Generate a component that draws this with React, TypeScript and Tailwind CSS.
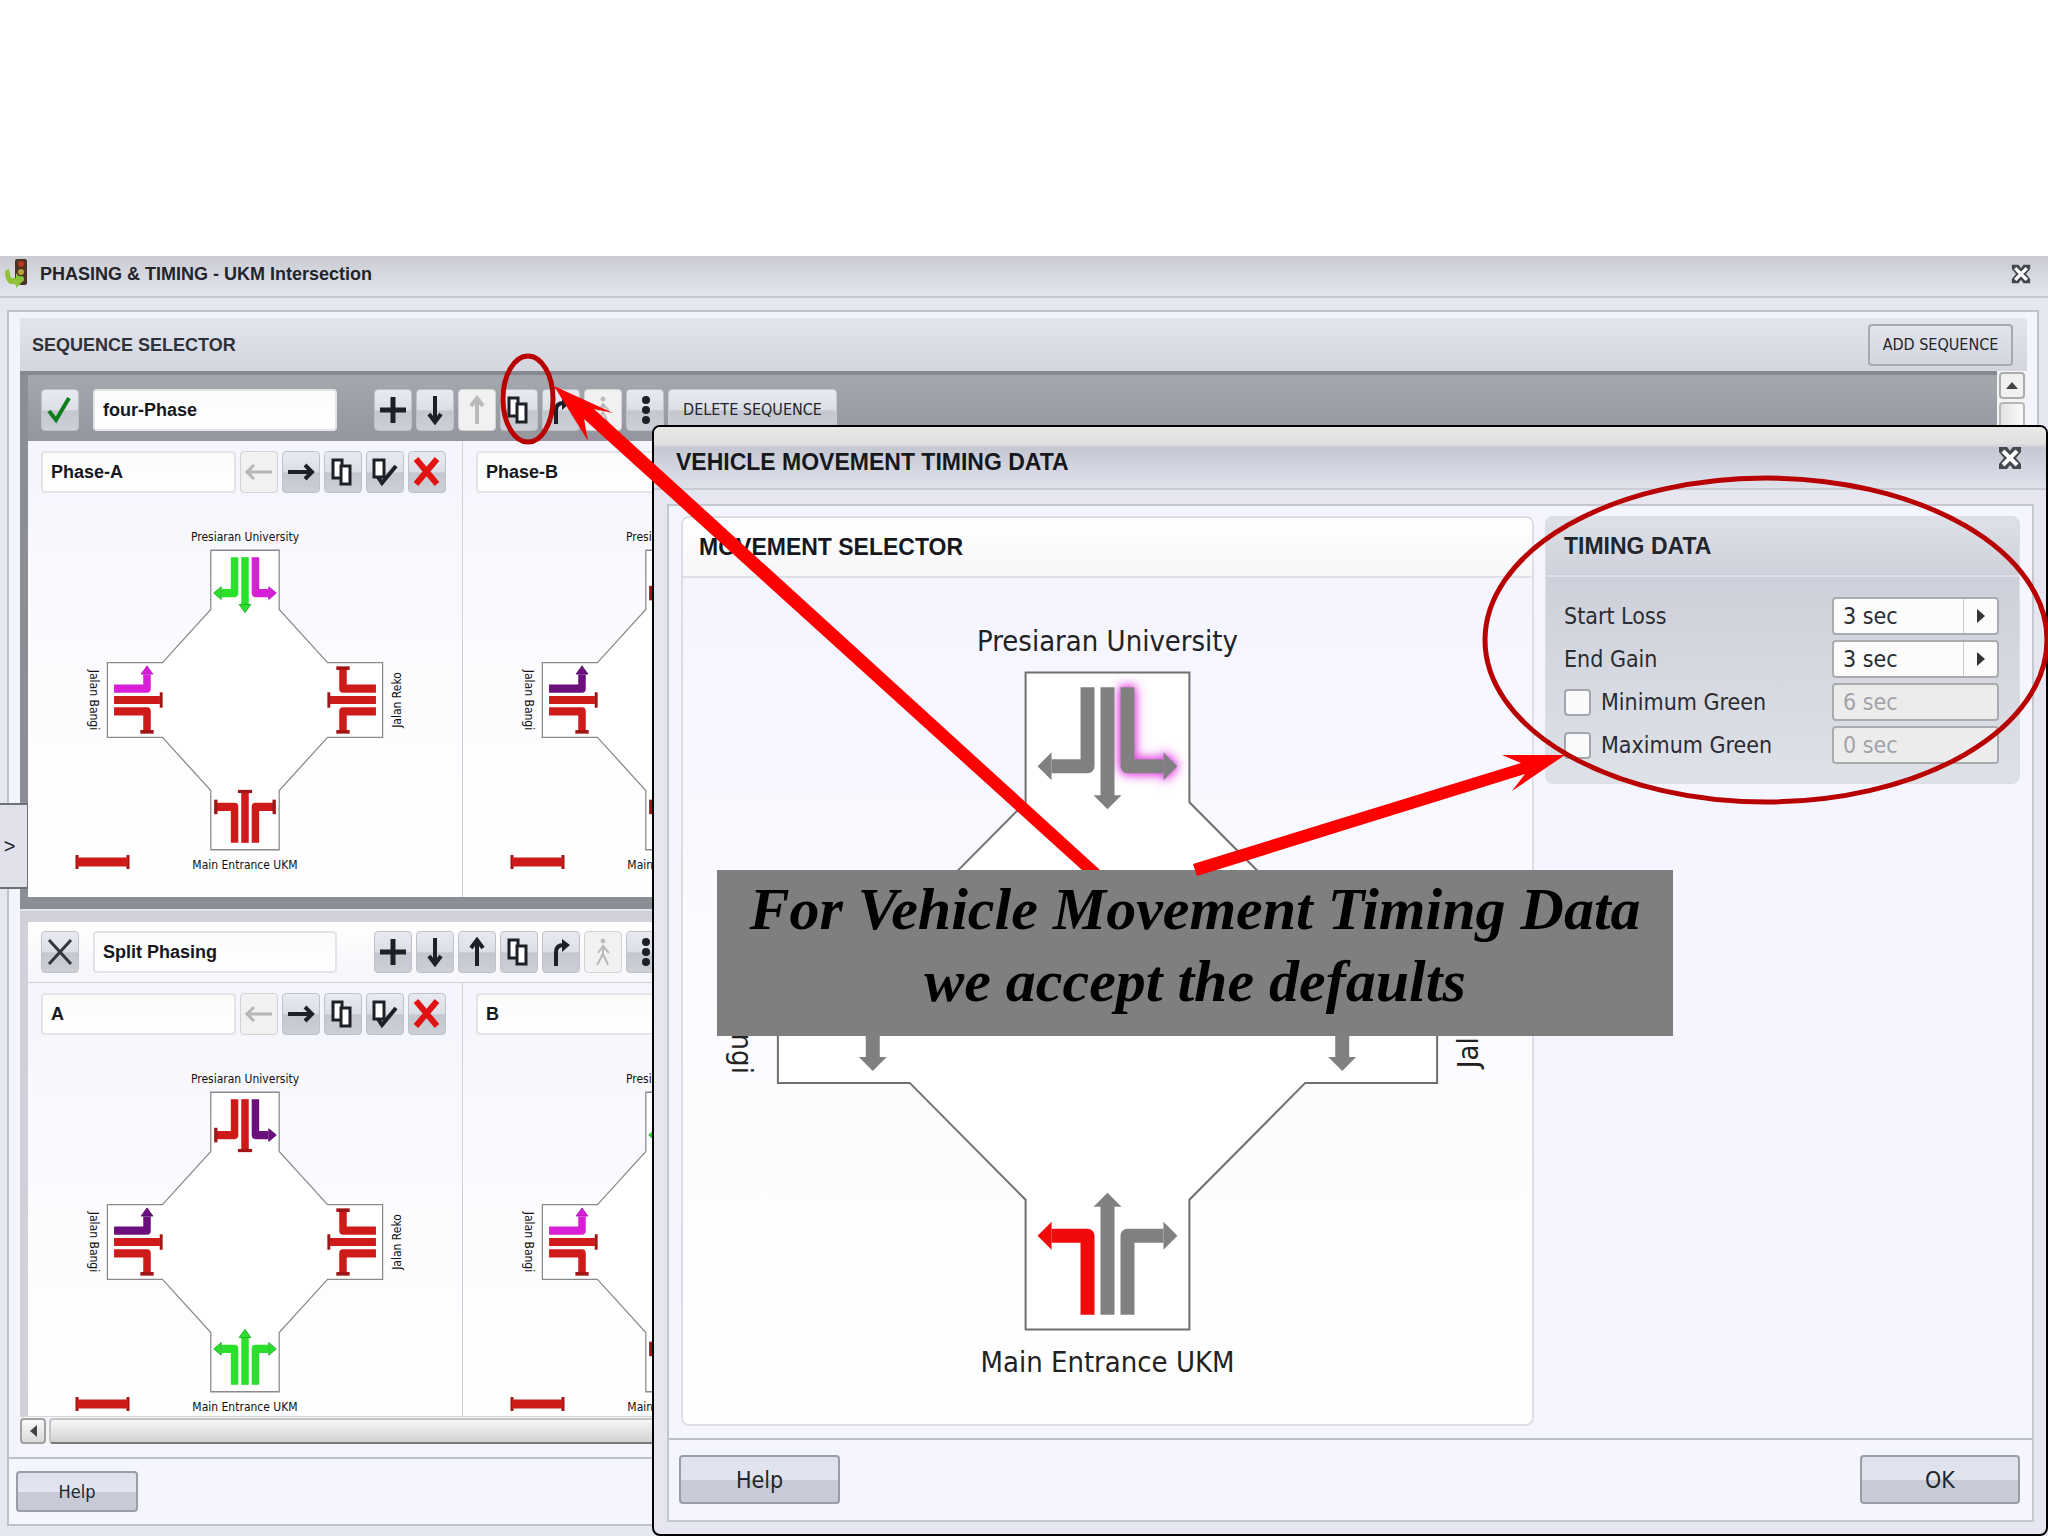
import { ReactNode } from 'react'

type Arm = [string, string, string]
type Arms = { south: Arm; west: Arm; north: Arm; east: Arm }

const RED = '#cf1a1a'
const GREEN = '#2be02b'
const PINK = '#d81fd8'
const PURPLE = '#6b0f7d'
const GREY = '#808080'

const tahoma = "font-['DejaVu_Sans_Condensed','Noto_Sans',sans-serif]"
const gloss = 'bg-[linear-gradient(#e9eaf1_0%,#dcdee6_50%,#c5c7d0_52%,#cdcfd7_100%)]'

const phaseA: Arms = { south: [RED, RED, RED], west: [PINK, RED, RED], north: [PINK, GREEN, GREEN], east: [RED, RED, RED] }
const phaseB: Arms = { south: [RED, RED, RED], west: [PURPLE, RED, RED], north: [PURPLE, RED, RED], east: [GREEN, GREEN, GREEN] }
const splitA: Arms = { south: [GREEN, GREEN, GREEN], west: [PURPLE, RED, RED], north: [PURPLE, RED, RED], east: [RED, RED, RED] }
const splitB: Arms = { south: [RED, RED, RED], west: [PINK, RED, RED], north: [PINK, GREEN, GREEN], east: [RED, RED, RED] }

const edges: Record<string, string> = { [GREEN]: '#1fa82a', [PINK]: '#b012b8', [PURPLE]: '#4f0a68' }

/* one approach with its left, through and right movements, drawn heading north */
const Approach = ({ colors, angle, gap, thick, glow }: { colors: Arm; angle: number; gap: number; thick: number; glow?: boolean }) => {
    const head = thick === 14 ? 14 : 18
    const tip = thick === 14 ? 70 : 75
    const turn = (side: number, color: string) => (
        <g filter={glow && side < 0 ? 'url(#glow)' : undefined}>
            <path
                d={`M${side * gap} 314V235H${side * (color === RED ? 68 : 56)}`}
                fill="none"
                stroke={color}
                strokeWidth={thick}
                strokeLinejoin="round"
            />
            {color === RED ? (
                <path d={`M${side * 70} 219v32`} stroke="#a01616" strokeWidth="8" />
            ) : (
                <path d={`M${side * tip} 235L${side * (tip - head)} 221v28z`} fill={color} stroke={edges[color]} strokeWidth="2" />
            )}
        </g>
    )

    return (
        <g transform={`rotate(${angle})`}>
            {turn(-1, colors[0])}
            <path d="M0 314V204" fill="none" stroke={colors[1]} strokeWidth={thick} />
            {colors[1] === RED ? (
                <path d="M-17 201h34" stroke="#a01616" strokeWidth="7" />
            ) : (
                <path d={`M0 192L-14 ${192 + head}h28z`} fill={colors[1]} stroke={edges[colors[1]]} strokeWidth="2" />
            )}
            {turn(1, colors[2])}
        </g>
    )
}

const outline =
    'M-82 -329H82V-199L198 -82H330V82H198L82 199V329H-82V199L-198 82H-330V-82H-198L-82 -199Z'

const PhaseDiagram = ({ arms }: { arms: Arms }) => (
    <svg viewBox="-217 -207 434 404" className={`w-[434px] h-[404px] shrink-0 ${tahoma}`}>
        <g transform="scale(0.417 0.455)">
            <path d={outline} fill="#fff" stroke="#8a8a8a" strokeWidth="3" />
            <Approach colors={arms.south} angle={0} gap={25} thick={18} />
            <Approach colors={arms.west} angle={90} gap={25} thick={18} />
            <Approach colors={arms.north} angle={180} gap={25} thick={18} />
            <Approach colors={arms.east} angle={270} gap={25} thick={18} />
        </g>
        <path d="M-168 155v14M-117 155v14" stroke="#a01414" strokeWidth="3" />
        <path d="M-168 162h51" stroke={RED} strokeWidth="9" />
        <g fontSize="12" textAnchor="middle" fill="#111">
            <text y="-159">Presiaran University</text>
            <text y="169">Main Entrance UKM</text>
            <text transform="translate(-155 0) rotate(90)">Jalan Bangi</text>
            <text transform="translate(156 0) rotate(-90)">Jalan Reko</text>
        </g>
    </svg>
)

const MovementDiagram = () => (
    <svg viewBox="-425 -424 850 848" className={`w-[850px] h-[848px] ${tahoma}`}>
        <defs>
            <filter id="glow" x="-80%" y="-40%" width="260%" height="180%">
                <feDropShadow dx="0" dy="0" stdDeviation="5" floodColor="#e23be2" floodOpacity="1" />
                <feDropShadow dx="0" dy="0" stdDeviation="5" floodColor="#e86be8" floodOpacity="0.9" />
            </filter>
        </defs>
        <path d={outline} fill="#fff" stroke="#6f6f6f" strokeWidth="2" />
        <Approach colors={['#f00a0a', GREY, GREY]} angle={0} gap={20} thick={14} />
        <Approach colors={[GREY, GREY, GREY]} angle={90} gap={20} thick={14} />
        <Approach colors={[GREY, GREY, GREY]} angle={180} gap={20} thick={14} glow />
        <Approach colors={[GREY, GREY, GREY]} angle={270} gap={20} thick={14} />
        <g fontSize="29" textAnchor="middle" fill="#222">
            <text y="-350">Presiaran University</text>
            <text y="371">Main Entrance UKM</text>
            <text transform="translate(-376 0) rotate(90)">Jalan Bangi</text>
            <text transform="translate(371 0) rotate(-90)">Jalan Reko</text>
        </g>
    </svg>
)

const Icon = ({ children, color = '#1d2026' }: { children: ReactNode; color?: string }) => (
    <svg viewBox="0 0 30 30" className="w-[30px] h-[30px] shrink-0" fill="none" stroke={color} strokeWidth="3">
        {children}
    </svg>
)

const icons = {
    check: <Icon color="#0f7d1e"><path d="M4 16l7 9L24 3" strokeWidth="4" /></Icon>,
    cross: <Icon color="#33363d"><path d="M4 3l22 24M26 3L4 27" strokeWidth="3" /></Icon>,
    plus: <Icon><path d="M15 2v26M2 15h26" strokeWidth="5" /></Icon>,
    down: <Icon><path d="M15 1v26M9 19l6 8 6-8" strokeWidth="4" /></Icon>,
    up: <Icon><path d="M15 29V3M9 11l6-8 6 8" strokeWidth="4" /></Icon>,
    upOff: <Icon color="#b9bab9"><path d="M15 29V3M9 11l6-8 6 8" strokeWidth="4" /></Icon>,
    left: <Icon color="#b5b6b5"><path d="M28 15H3M10 8l-7 7 7 7" /></Icon>,
    right: <Icon><path d="M2 15h25M19 8l7 7-7 7" strokeWidth="4" /></Icon>,
    copy: (
        <Icon>
            <path d="M5 3h9v18H5z" fill="#fff" />
            <path d="M13 9h9v18h-9z" fill="#fff" />
        </Icon>
    ),
    edit: (
        <Icon>
            <path d="M4 3h10v17H4z" fill="#fff" />
            <path d="M8 20l4 6L26 9" strokeWidth="4" />
        </Icon>
    ),
    remove: <Icon color="#e01212"><path d="M4 2l21 25M25 2L4 27" strokeWidth="6" /></Icon>,
    turn: (
        <Icon>
            <path d="M10 29V15q0-7 8-7" strokeWidth="4" />
            <path d="M16 2l8 6-8 7z" fill="#1d2026" stroke="none" />
        </Icon>
    ),
    walk: (
        <Icon color="#b9bab9">
            <circle cx="15" cy="4" r="2" fill="#b9bab9" strokeWidth="1" />
            <path d="M15 8v9l5 11M15 17l-6 11M15 9l-5 7M15 9l6 7" strokeWidth="2" />
        </Icon>
    ),
    dots: (
        <Icon>
            <g fill="#1d2026" stroke="none">
                <circle cx="16" cy="5" r="4" />
                <circle cx="16" cy="15" r="4" />
                <circle cx="16" cy="25" r="4" />
            </g>
        </Icon>
    )
}

const ToolButton = ({ icon, label, disabled }: { icon: keyof typeof icons; label: string; disabled?: boolean }) => (
    <button
        aria-label={label}
        disabled={disabled}
        className={`w-[38px] h-[42px] shrink-0 flex items-center justify-center rounded-sm border ${
            disabled ? 'bg-[#f1f1f2] border-[#d2d3d6]' : `${gloss} border-[#bfc1ca]`
        }`}
    >
        {icons[icon]}
    </button>
)

const NameInput = ({ value, label, wide }: { value: string; label: string; wide?: boolean }) => (
    <input
        aria-label={label}
        defaultValue={value}
        className={`h-[42px] shrink-0 px-2 rounded-sm border-2 border-[#e3e4e8] bg-[linear-gradient(#fbfbfb,#ffffff)] text-lg font-bold text-[#16181d] ${
            wide ? 'w-[244px]' : 'w-[195px]'
        }`}
    />
)

const PhasePanel = ({ name, arms }: { name: string; arms: Arms }) => (
    <div className="w-[435px] shrink-0 flex flex-col border-r border-[#cfd0d8] bg-[linear-gradient(#f4f5fd,#fcfbfe_50%,#ffffff)]">
        <div className="flex gap-1 pt-[10px] pl-[13px]">
            <NameInput value={name} label="Phase name" />
            <ToolButton icon="left" label="Move phase left" disabled />
            <ToolButton icon="right" label="Move phase right" />
            <ToolButton icon="copy" label="Clone phase" />
            <ToolButton icon="edit" label="Edit phase" />
            <ToolButton icon="remove" label="Delete phase" />
        </div>
        <PhaseDiagram arms={arms} />
    </div>
)

const Sequence = ({
    name,
    active,
    phases
}: {
    name: string
    active?: boolean
    phases: Array<{ name: string; arms: Arms }>
}) => (
    <section
        className={`shrink-0 flex flex-col pl-2 ${
            active ? 'bg-[#8b8e94] border-t-4 border-[#85888e] pb-3' : 'bg-[#d0d1da] border-t-2 border-[#e6e7ee] pt-[11px]'
        }`}
    >
        <div
            className={`flex items-center ${
                active ? 'h-[66px] pt-1 bg-[linear-gradient(#a5a8af,#94959e)]' : 'h-[61px] bg-[linear-gradient(#ffffff,#f5f5fb)] border-b border-[#cfd0d8]'
            }`}
        >
            <div className="flex gap-[14px] pl-[13px]">
                <ToolButton icon={active ? 'check' : 'cross'} label="Use sequence" />
                <NameInput value={name} label="Sequence name" wide />
            </div>
            <div className="flex gap-1 pl-[37px]">
                <ToolButton icon="plus" label="Add phase" />
                <ToolButton icon="down" label="Move sequence down" />
                <ToolButton icon={active ? 'upOff' : 'up'} label="Move sequence up" disabled={active} />
                <ToolButton icon="copy" label="Vehicle movement timing" />
                <ToolButton icon="turn" label="Turn settings" />
                <ToolButton icon="walk" label="Pedestrian settings" disabled />
                <ToolButton icon="dots" label="More" />
                <button className={`w-[169px] h-[42px] rounded-sm border border-[#c9cad2] text-base text-[#22252b] ${gloss} ${tahoma}`}>
                    DELETE SEQUENCE
                </button>
            </div>
        </div>
        <div className="flex bg-white">
            {phases.map(({ name, arms }) => (
                <PhasePanel key={name} name={name} arms={arms} />
            ))}
        </div>
    </section>
)

const CloseButton = ({ className }: { className: string }) => (
    <button aria-label="Close" className={className}>
        <svg viewBox="0 0 24 24" className="w-full h-full">
            <path d="M1 1h8l3 4 3-4h8v5l-5 6 5 6v5h-8l-3-4-3 4H1v-5l5-6-5-6z" fill="#44474e" />
            <path d="M5 5l14 14M19 5L5 19" stroke="#fff" strokeWidth="4" />
        </svg>
    </button>
)

const DialogButton = ({ children, className }: { children: ReactNode; className: string }) => (
    <button
        className={`rounded-sm border-2 border-[#9b9da6] bg-[linear-gradient(#dfe2ed_0%,#e2e5ef_50%,#c8cbd6_52%,#c8cbd5_100%)] text-[#22252b] ${tahoma} ${className}`}
    >
        {children}
    </button>
)

const fieldLook = 'w-[167px] h-[38px] rounded-sm border-2 border-[#a9abb0] flex overflow-hidden'

const TimingRow = ({ id, label, value, optional }: { id: string; label: string; value: string; optional?: boolean }) => (
    <div className="flex items-center justify-between h-[38px]">
        {optional ? (
            <label className="flex items-center gap-[10px]">
                <input
                    type="checkbox"
                    className="appearance-none w-[27px] h-[27px] rounded-sm border-2 border-[#a4a6ad] bg-[#fafafc]"
                />
                {label}
            </label>
        ) : (
            <label htmlFor={id}>{label}</label>
        )}
        <div className={`${fieldLook} ${optional ? 'bg-[#ececed]' : 'bg-[#fcfcfc]'}`}>
            <input
                id={id}
                aria-label={label}
                defaultValue={value}
                disabled={optional}
                className={`w-0 grow pl-[9px] ${optional ? 'text-[#a2a3a6]' : 'text-[#2a2c31]'}`}
            />
            {!optional && (
                <button aria-label={`Change ${label}`} className="w-[34px] flex items-center justify-center border-l border-[#c9cacd]">
                    <svg viewBox="0 0 8 14" className="w-2 h-[14px]">
                        <path d="M0 0l8 7-8 7z" fill="#333" />
                    </svg>
                </button>
            )}
        </div>
    </div>
)

const TimingDialog = () => (
    <div
        role="dialog"
        className="absolute left-[652px] right-0 top-[425px] bottom-0 flex flex-col rounded-lg border-2 border-black bg-[#e5e6ef]"
    >
        <header className="h-[63px] shrink-0 flex items-center justify-between pl-[22px] pr-6 rounded-t-md border-b-2 border-[#c9cbd5] bg-[linear-gradient(#e8e9e6_0%,#dfe0df_28%,#c5c8d3_34%,#dfe2eb_100%)]">
            <h2 className="pt-2 text-[23px] leading-7 font-bold text-[#16181d]">VEHICLE MOVEMENT TIMING DATA</h2>
            <CloseButton className="w-6 h-6" />
        </header>
        <div className="grow min-h-0 flex flex-col mt-[14px] ml-[13px] mr-3 mb-3 border-2 border-[#c4c6d0] bg-[#f4f5fe]">
            <div className="grow min-h-0 flex gap-[11px] pt-[10px] px-3 pb-3">
                <section className="w-[853px] shrink-0 flex flex-col rounded-lg border-2 border-[#dddee3] bg-[linear-gradient(#f3f4ff,#fbfbff_50%,#ffffff)] overflow-hidden">
                    <h3 className="h-[60px] shrink-0 flex items-center pl-4 border-b-2 border-[#dfe0e6] bg-[linear-gradient(#ffffff,#f7f7fa)] text-[23px] leading-7 font-bold text-[#16181d]">
                        MOVEMENT SELECTOR
                    </h3>
                    <div className="grow min-h-0 flex items-center justify-center">
                        <MovementDiagram />
                    </div>
                </section>
                <section className="grow self-start rounded-lg border border-[#dcdee4] bg-[linear-gradient(#dfe1e8_0px,#cdd0da_60px,#cfd2db_80px,#dfe1e8_100%)]">
                    <h3 className="h-[60px] flex items-center pl-[18px] border-b-2 border-[#dfe1e9] text-[23px] leading-7 font-bold text-[#22252b]">
                        TIMING DATA
                    </h3>
                    <div className={`flex flex-col gap-[5px] pt-5 pb-[19px] pl-[18px] pr-5 text-[23px] leading-7 text-[#2a2c31] ${tahoma}`}>
                        <TimingRow id="start-loss" label="Start Loss" value="3 sec" />
                        <TimingRow id="end-gain" label="End Gain" value="3 sec" />
                        <TimingRow id="min-green" label="Minimum Green" value="6 sec" optional />
                        <TimingRow id="max-green" label="Maximum Green" value="0 sec" optional />
                    </div>
                </section>
            </div>
            <footer className="h-[82px] shrink-0 flex justify-between items-start border-t-2 border-[#bdbfc7] pt-[15px] pl-[10px] pr-3">
                <DialogButton className="w-[161px] h-[49px] text-[23px] leading-7">Help</DialogButton>
                <DialogButton className="w-[160px] h-[49px] text-[23px] leading-7">OK</DialogButton>
            </footer>
        </div>
    </div>
)

const TrafficLight = () => (
    <svg viewBox="0 0 22 32" className="w-[22px] h-8">
        <rect x="10" y="1" width="12" height="26" rx="2" fill="#4a3326" />
        <circle cx="16" cy="6" r="3" fill="#c1331c" />
        <circle cx="16" cy="14" r="3" fill="#b8a13a" />
        <circle cx="16" cy="21" r="3" fill="#7bc63a" />
        <path d="M0 13l4-2 2 9h5v-5l7 8-7 7v-4H5q-5-3-5-13z" fill="#8fc23a" />
    </svg>
)

/* callouts over the windows */
const Annotations = () => (
    <svg className="absolute inset-0 w-full h-full pointer-events-none">
        <ellipse cx="528" cy="399" rx="25" ry="43" fill="none" stroke="#b80000" strokeWidth="5" />
        <ellipse cx="1766" cy="640" rx="281" ry="162" fill="none" stroke="#b80000" strokeWidth="5" />
        <path d="M554 386L613 413L594 409L1100 870H1082L584 419L588 441Z" fill="#f00" />
        <path d="M1565 755L1502 755L1521 763L1193 864L1197 876L1525 774L1512 791Z" fill="#f00" />
    </svg>
)

export default function App() {
    return (
        <div className="relative h-screen min-h-[1200px] overflow-hidden flex flex-col bg-white pt-64 font-['Liberation_Sans',Arial,sans-serif]">
            <main className="grow min-h-0 flex flex-col bg-[#e5e7f1]">
                <header className="h-[42px] shrink-0 flex items-center gap-[13px] pl-[5px] pr-[17px] pb-[5px] border-b-2 border-[#c6c8d2] bg-[linear-gradient(#cbccd2,#e3e5ef)]">
                    <TrafficLight />
                    <h1 className="grow text-lg font-bold text-[#22252b]">PHASING &amp; TIMING - UKM Intersection</h1>
                    <CloseButton className="w-5 h-5" />
                </header>

                <div className="grow min-h-0 flex flex-col mt-3 ml-[7px] mr-[9px] mb-[10px] border-2 border-[#bfc1cb] bg-[#f3f4fd]">
                    <div className="grow min-h-0 flex flex-col mt-[6px] ml-[11px] mr-[10px]">
                        <div className="h-[53px] shrink-0 flex items-center justify-between pl-3 pr-[14px] bg-[linear-gradient(#e3e5ed,#d3d6df)]">
                            <h2 className="text-lg font-bold text-[#2f3238]">SEQUENCE SELECTOR</h2>
                            <button className={`w-[145px] h-[42px] rounded-sm border-2 border-[#a6a8b2] text-base text-[#22252b] bg-[linear-gradient(#e2e4ec,#d3d6df)] ${tahoma}`}>
                                ADD SEQUENCE
                            </button>
                        </div>
                        <div className="grow min-h-0 flex">
                            <div className="grow min-w-0 flex flex-col overflow-hidden">
                                <Sequence
                                    name="four-Phase"
                                    active
                                    phases={[
                                        { name: 'Phase-A', arms: phaseA },
                                        { name: 'Phase-B', arms: phaseB }
                                    ]}
                                />
                                <Sequence
                                    name="Split Phasing"
                                    phases={[
                                        { name: 'A', arms: splitA },
                                        { name: 'B', arms: splitB }
                                    ]}
                                />
                            </div>
                            <div className="w-[30px] shrink-0 flex flex-col gap-[3px] pt-[1px] pl-[2px] bg-[#f4f4f6]">
                                <button aria-label="Scroll up" className="w-[26px] h-[27px] flex items-center justify-center rounded-sm border-2 border-[#a9abae] bg-[#f0f0f1]">
                                    <svg viewBox="0 0 12 7" className="w-3 h-[7px]"><path d="M6 0l6 7H0z" fill="#444" /></svg>
                                </button>
                                <div className="w-[26px] grow rounded-sm border-2 border-[#b5b7ba] bg-[linear-gradient(90deg,#e2e2e3,#fafafa)]" />
                            </div>
                        </div>
                        <div className="h-[29px] shrink-0 flex gap-[3px] py-[1px] border-t border-[#d5d6da] bg-[#f4f4f6]">
                            <button aria-label="Scroll left" className="w-[26px] flex items-center justify-center rounded-sm border-2 border-[#a0a2a5] bg-[linear-gradient(#fafafa,#d9d9da)]">
                                <svg viewBox="0 0 7 12" className="w-[7px] h-3"><path d="M0 6l7-6v12z" fill="#444" /></svg>
                            </button>
                            <div className="grow rounded-sm border-2 border-[#c3c4c7] border-b-[#77787b] bg-[linear-gradient(#f7f7f7,#d2d2d3)]" />
                        </div>
                    </div>
                    <footer className="h-[67px] shrink-0 mt-3 pt-3 pl-[7px] border-t-2 border-[#bfc1c9] bg-[#f4f5fd]">
                        <DialogButton className="w-[122px] h-[41px] text-lg leading-5">Help</DialogButton>
                    </footer>
                </div>
            </main>

            <button
                aria-label="Expand side panel"
                className="absolute left-0 top-[803px] w-7 h-[86px] pr-2 border-y-2 border-r border-[#6c7078] bg-[#e0e1eb] text-xl text-[#1d2026]"
            >
                &gt;
            </button>

            <TimingDialog />

            <p className="absolute left-[717px] top-[870px] w-[956px] h-[166px] pt-[3px] bg-[#807f80] text-center text-[60px] leading-[72px] font-bold italic text-black font-['Liberation_Serif','Times_New_Roman',serif]">
                For Vehicle Movement Timing Data
                <br />
                we accept the defaults
            </p>
            <Annotations />
        </div>
    )
}
